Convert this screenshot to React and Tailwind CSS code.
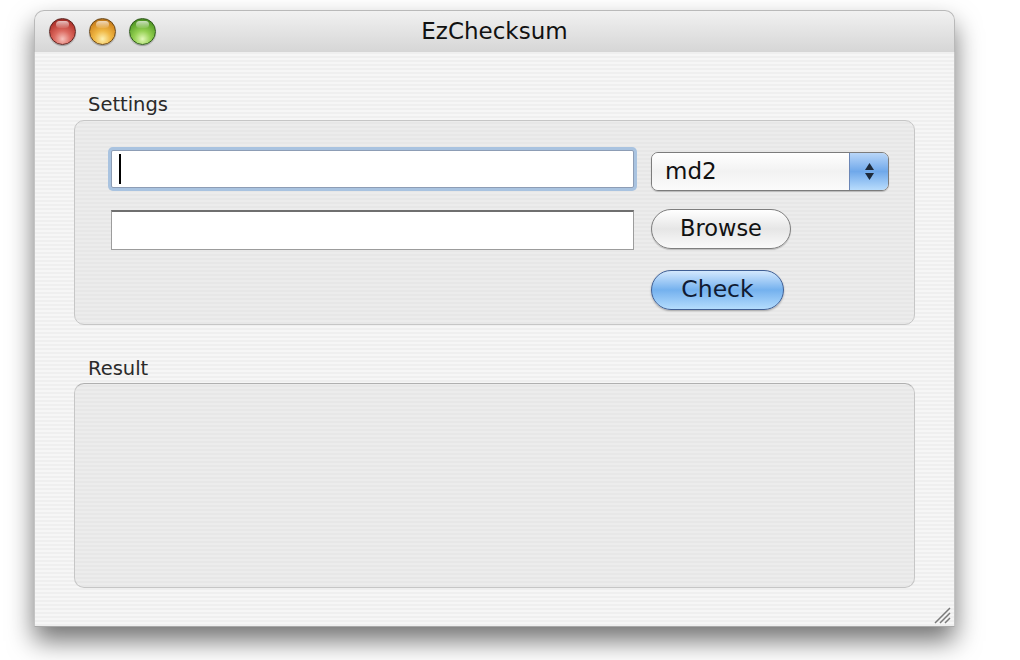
import React from 'react';

const font = { fontFamily: '"DejaVu Sans", "Noto Sans", sans-serif' };

function Light({ color }) {
    const styles = {
        red: 'bg-[radial-gradient(circle_at_50%_80%,#f6c2bc_0%,#dc6a60_35%,#b83a32_70%,#7c1f1a_100%)] border-[#5e2420]',
        yellow: 'bg-[radial-gradient(circle_at_50%_80%,#fdf0b0_0%,#f0b845_35%,#d48a22_70%,#8c5414_100%)] border-[#6c4816]',
        green: 'bg-[radial-gradient(circle_at_50%_80%,#e2f8b8_0%,#94d052_35%,#5ea42c_70%,#2f6a14_100%)] border-[#2e5a1a]',
    };
    return (
        <div className={`relative w-[27px] h-[27px] rounded-full border ${styles[color]} shadow-[0_1px_1px_rgba(0,0,0,0.3)]`}>
            <div className="absolute left-[6px] top-[2px] w-[13px] h-[7px] rounded-full bg-gradient-to-b from-white/70 to-white/10"></div>
        </div>
    );
}

export default function App() {
    return (
        <div className="w-[1020px] h-[660px] bg-white overflow-hidden" style={font}>
            <div className="ml-[34px] pt-[10px]">
                {/* Window */}
                <div className="w-[921px] h-[617px] rounded-t-[10px] shadow-[0_14px_26px_rgba(0,0,0,0.55)] flex flex-col">
                    {/* Title bar */}
                    <div className="relative h-[42px] rounded-t-[10px] border border-b-0 border-[#b9b9b9] bg-gradient-to-b from-[#f1f1f1] to-[#d6d6d6] border-b border-b-[#8f8f8f] flex items-center pl-[14px] gap-[13px]">
                        <Light color="red" />
                        <Light color="yellow" />
                        <Light color="green" />
                        <div className="absolute inset-0 flex items-center justify-center text-[23px] text-[#111] pointer-events-none">
                            EzChecksum
                        </div>
                    </div>

                    {/* Body */}
                    <div className="flex-1 px-[39px] pt-[41px] border-x border-[#c4c4c4] border-b border-b-[#a8a8a8] bg-[repeating-linear-gradient(0deg,#efefef_0px,#efefef_2px,#f6f6f6_2px,#f6f6f6_4px)]">
                        {/* Settings */}
                        <div className="pl-[14px] text-[19.5px] leading-[24px] text-[#2a2a2a]">Settings</div>
                        <div className="mt-[3px] h-[205px] rounded-[10px] border border-[#c6c6c6] bg-[repeating-linear-gradient(0deg,#e7e7e7_0px,#e7e7e7_2px,#ececec_2px,#ececec_4px)] pl-[36px] pt-[29px]">
                            <div className="flex items-start">
                                <div className="w-[523px] h-[38px] bg-white border border-[#8d9db5] shadow-[0_0_0_3px_#a9c3e0] rounded-[2px] flex items-center pl-[7px]">
                                    <div className="w-[2px] h-[30px] bg-black"></div>
                                </div>
                                <div className="ml-[17px] mt-[2px] w-[238px] h-[39px] rounded-[7px] border border-[#7c7c7c] flex overflow-hidden shadow-[0_1px_1px_rgba(0,0,0,0.2)]">
                                    <div className="flex-1 bg-gradient-to-b from-[#ffffff] via-[#f2f2f2] to-[#fbfbfb] flex items-center pl-[13px] text-[23px] text-[#111]">
                                        md2
                                    </div>
                                    <div className="w-[39px] border-l border-[#6b86b6] bg-gradient-to-b from-[#b9d6f8] via-[#6fa8ea] to-[#b8dcfc] flex flex-col items-center justify-center gap-[3px]">
                                        <svg width="9" height="7" viewBox="0 0 9 7"><path d="M4.5 0 L9 7 L0 7 Z" fill="#1e2a3a" /></svg>
                                        <svg width="9" height="7" viewBox="0 0 9 7"><path d="M0 0 L9 0 L4.5 7 Z" fill="#1e2a3a" /></svg>
                                    </div>
                                </div>
                            </div>
                            <div className="flex items-start mt-[18px]">
                                <div className="mt-[1px] w-[523px] h-[40px] bg-white border border-[#9c9c9c] border-t-[#6f6f6f] border-t-2"></div>
                                <div className="ml-[17px] w-[140px] h-[40px] rounded-full border border-[#7e7e7e] bg-gradient-to-b from-[#ffffff] via-[#e6e6e6] to-[#fafafa] shadow-[0_1px_1px_rgba(0,0,0,0.2)] flex items-center justify-center text-[22.5px] text-[#111]">
                                    Browse
                                </div>
                            </div>
                            <div className="mt-[20px] ml-[540px] w-[133px] h-[40px] rounded-full border border-[#3f5f95] bg-gradient-to-b from-[#d3e8fd] via-[#74b1ee] to-[#b4dcfd] shadow-[0_1px_2px_rgba(0,0,0,0.3)] flex items-center justify-center text-[23.5px] text-[#111b33]">
                                Check
                            </div>
                        </div>

                        {/* Result */}
                        <div className="mt-[32px] pl-[14px] text-[19.5px] leading-[24px] text-[#2a2a2a]">Result</div>
                        <div className="mt-[2px] h-[205px] rounded-[10px] border border-[#c6c6c6] border-t-[#b0b0b0] bg-[repeating-linear-gradient(0deg,#e7e7e7_0px,#e7e7e7_2px,#ececec_2px,#ececec_4px)]"></div>

                        <div className="flex justify-end mr-[-36px] mt-[18px]">
                            <svg width="18" height="18" viewBox="0 0 18 18">
                                <path d="M2 17 L17 2 M7 17 L17 7 M12 17 L17 12" stroke="#7a7a7a" strokeWidth="1.5" />
                            </svg>
                        </div>
                    </div>
                </div>
            </div>
        </div>
    );
}
